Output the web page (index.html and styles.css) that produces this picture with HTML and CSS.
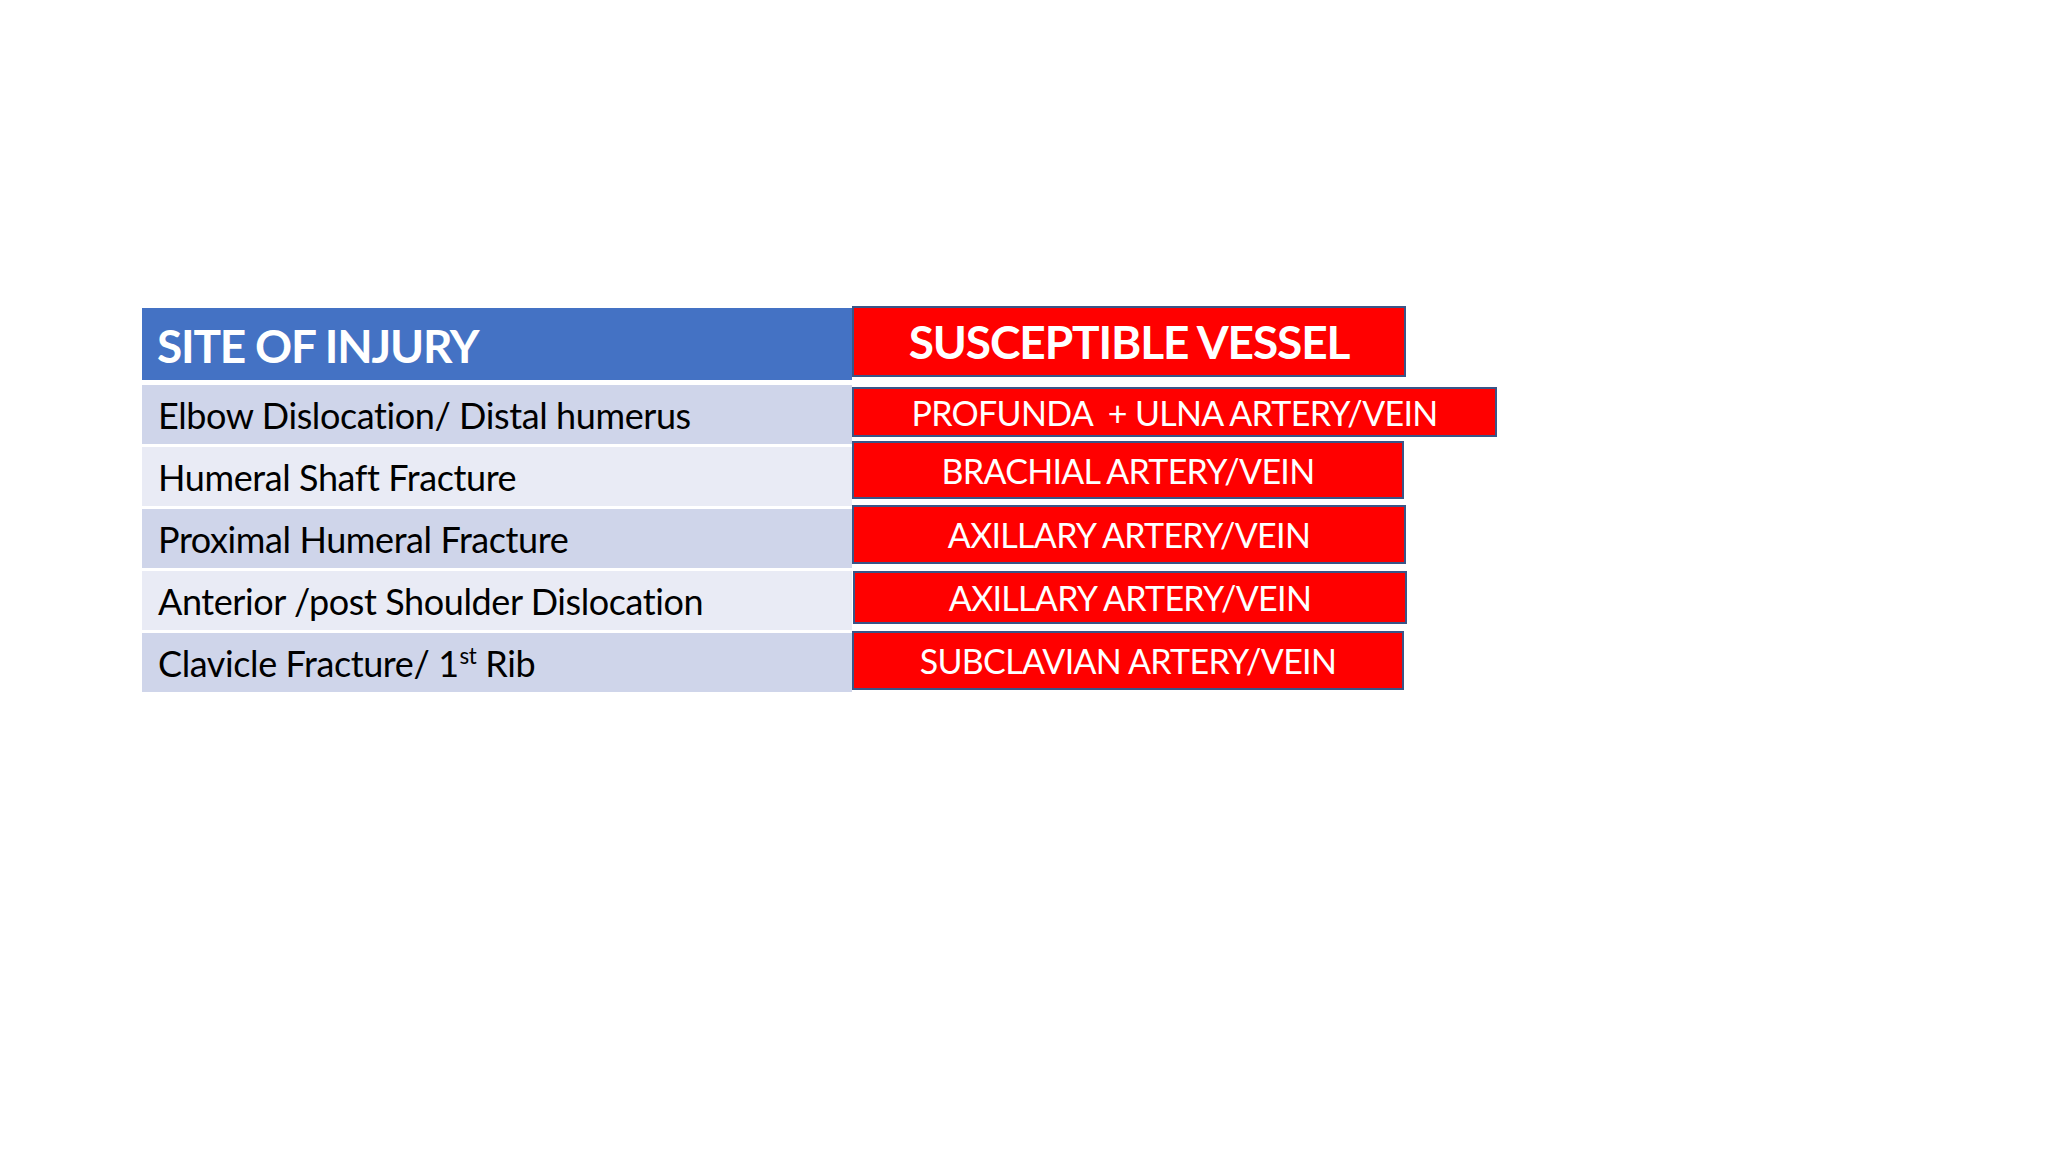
FILE: index.html
```html
<!DOCTYPE html>
<html lang="en">
<head>
<meta charset="utf-8">
<title>Site of injury – susceptible vessel</title>
<link rel="stylesheet" href="styles.css">
</head>
<body>
<main class="slide">
  <section class="sites">
    <div class="site-head"><span>SITE OF INJURY</span></div>
    <div class="site-row odd"><span>Elbow Dislocation/ Distal humerus</span></div>
    <div class="site-row even"><span>Humeral Shaft Fracture</span></div>
    <div class="site-row odd"><span>Proximal Humeral Fracture</span></div>
    <div class="site-row even"><span>Anterior /post Shoulder Dislocation</span></div>
    <div class="site-row odd"><span>Clavicle Fracture/ 1<sup class="ord">st</sup> Rib</span></div>
  </section>
  <section class="vessels">
    <div class="vessel vessel-head"><span>SUSCEPTIBLE VESSEL</span></div>
    <div class="vessel v1"><span>PROFUNDA&nbsp; + ULNA ARTERY/VEIN</span></div>
    <div class="vessel v2"><span>BRACHIAL ARTERY/VEIN</span></div>
    <div class="vessel v3"><span>AXILLARY ARTERY/VEIN</span></div>
    <div class="vessel v4"><span>AXILLARY ARTERY/VEIN</span></div>
    <div class="vessel v5"><span>SUBCLAVIAN ARTERY/VEIN</span></div>
  </section>
</main>
</body>
</html>
```

FILE: styles.css
```css
html, body {
  margin: 0;
  padding: 0;
  background: #ffffff;
}

body {
  width: 2048px;
  height: 1152px;
  overflow: hidden;
  font-family: Lato, "Open Sans", "Liberation Sans", sans-serif;
}

.slide {
  display: flex;
  align-items: flex-start;
  padding: 306px 0 0 142px;
}

.sites {
  width: 710px;
  margin-top: 2px;
  display: flex;
  flex-direction: column;
  gap: 3px;
}

.site-head {
  height: 72px;
  margin-bottom: 2px;
  background: #4472c4;
  color: #ffffff;
  font-weight: 700;
  font-size: 46px;
  letter-spacing: -1.2px;
  display: flex;
  align-items: center;
  padding-left: 15px;
  padding-top: 2px;
  box-sizing: border-box;
}

.site-row {
  height: 59px;
  display: flex;
  align-items: center;
  padding-left: 16px;
  box-sizing: border-box;
  color: #000000;
  font-size: 36px;
  letter-spacing: -0.4px;
}

.site-row.odd {
  background: #cfd5ea;
}

.site-row.even {
  background: #e9ebf5;
}

.ord {
  font-size: 0.62em;
  line-height: 0;
  vertical-align: 0.55em;
  margin-left: 1px;
}

.vessels {
  display: flex;
  flex-direction: column;
  align-items: flex-start;
}

.vessel {
  box-sizing: border-box;
  background: #ff0000;
  border: 2px solid #3a5587;
  color: #ffffff;
  font-size: 34px;
  letter-spacing: -0.7px;
  display: flex;
  align-items: center;
  justify-content: center;
  white-space: nowrap;
  width: 554px;
}

.vessel-head {
  height: 71px;
  font-weight: 700;
  font-size: 46px;
  letter-spacing: -1.1px;
}

.v1 {
  margin-top: 10px;
  height: 50px;
  width: 645px;
}

.v2 {
  margin-top: 4px;
  height: 58px;
  width: 552px;
}

.v3 {
  margin-top: 6px;
  height: 59px;
}

.v4 {
  margin-top: 7px;
  height: 53px;
  margin-left: 1px;
}

.v5 {
  margin-top: 7px;
  height: 59px;
  width: 552px;
}
```
